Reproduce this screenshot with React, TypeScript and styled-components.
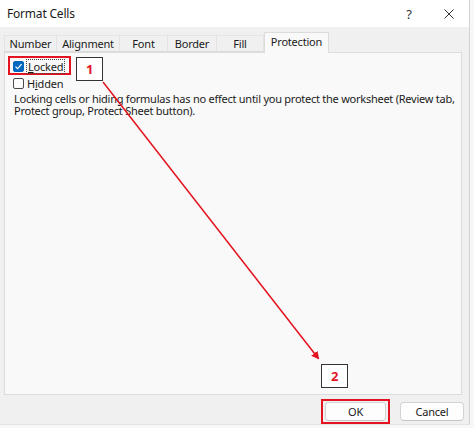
import styled, { createGlobalStyle } from "styled-components";

const GlobalStyle = createGlobalStyle`
  html, body {
    margin: 0;
    padding: 0;
    background: #f7f7f7;
  }
  body {
    font-family: "Noto Sans", "Open Sans", sans-serif;
    color: #1b1b1b;
    letter-spacing: -0.2px;
  }
`;

const Window = styled.div`
  position: relative;
  width: 470px;
  height: 425px;
  background: #f0f0f0;
  border-right: 1px solid #d4d4d4;
  border-bottom: 1px solid #e4e4e4;
  box-sizing: border-box;
  overflow: hidden;
`;

const TitleBar = styled.div`
  height: 27px;
  background: #ffffff;
  display: flex;
  align-items: center;
  padding-left: 7px;
`;

const Title = styled.div`
  font-size: 12px;
  flex: 1;
`;

const TitleButton = styled.div`
  width: 40px;
  height: 27px;
  display: flex;
  align-items: center;
  justify-content: center;
  font-size: 13px;
  color: #333;
`;

const Body = styled.div`
  padding: 5px 7px 0 4px;
`;

const TabRow = styled.div`
  display: flex;
  align-items: flex-end;
  height: 20px;
  position: relative;
  z-index: 1;
`;

const Tab = styled.div<{ $active?: boolean; $first?: boolean; $w: number }>`
  width: ${(p) => p.$w}px;
  box-sizing: border-box;
  height: ${(p) => (p.$active ? "21px" : "17px")};
  margin-bottom: ${(p) => (p.$active ? "-1px" : "0")};
  display: flex;
  align-items: center;
  justify-content: center;
  font-size: 11px;
  padding-bottom: ${(p) => (p.$active ? "3px" : "0")};
  background: ${(p) => (p.$active ? "#f9f9f9" : "#f0f0f0")};
  border: 1px solid ${(p) => (p.$active ? "#dcdcdc" : "#e3e3e3")};
  border-bottom: ${(p) => (p.$active ? "none" : "1px solid #dcdcdc")};
  border-left: ${(p) => (p.$first || p.$active ? undefined : "none")};
  color: #1b1b1b;
`;

const Panel = styled.div`
  height: 343px;
  box-sizing: border-box;
  background: #f9f9f9;
  border: 1px solid #dcdcdc;
  padding: 3px 4px 0 3px;
  position: relative;
`;

const Mark = styled.div`
  display: flex;
  width: fit-content;
  border: 2px solid #e3141f;
  padding: 1px 5px 0 3px;
`;

const CheckRow = styled.div`
  display: flex;
  align-items: center;
  gap: 3px;
  font-size: 11px;
  height: 14px;
`;

const Plain = styled.div`
  padding: 1px 0 0 5px;
`;

const Box = styled.span<{ $checked?: boolean }>`
  width: 11px;
  height: 11px;
  box-sizing: border-box;
  border-radius: 2px;
  border: 1px solid ${(p) => (p.$checked ? "#0067c0" : "#4a4a4a")};
  background: ${(p) => (p.$checked ? "#0067c0" : "#fdfdfd")};
  display: flex;
  align-items: center;
  justify-content: center;
`;

const Focus = styled.span`
  outline: 1px dotted #444;
  outline-offset: 0;
  padding: 0 1px;
  line-height: 13px;
`;

const Key = styled.span`
  text-decoration: underline;
  text-underline-offset: 1px;
`;

const Note = styled.p`
  margin: 3px 0 0 6px;
  font-size: 11px;
  line-height: 12px;
  white-space: nowrap;
  letter-spacing: -0.25px;
`;

const Callout = styled.div<{ $x: number; $y: number }>`
  position: absolute;
  left: ${(p) => p.$x}px;
  top: ${(p) => p.$y}px;
  width: 27px;
  height: 24px;
  box-sizing: border-box;
  border: 1px solid #333;
  background: #ffffff;
  color: #e3141f;
  font-weight: 700;
  font-size: 13px;
  display: flex;
  align-items: center;
  justify-content: center;
  z-index: 3;
`;

const Footer = styled.div`
  display: flex;
  justify-content: flex-end;
  align-items: center;
  gap: 10px;
  padding-top: 4px;
  margin-right: -2px;
`;

const ButtonMark = styled.div`
  border: 2px solid #e3141f;
  padding: 1px 2px;
  display: flex;
`;

const Button = styled.div<{ $w: number }>`
  width: ${(p) => p.$w}px;
  height: 19px;
  box-sizing: border-box;
  border: 1px solid #d3d3d3;
  border-bottom-color: #c4c4c4;
  border-radius: 4px;
  background: #fdfdfd;
  font-size: 11px;
  display: flex;
  align-items: center;
  justify-content: center;
`;

const Arrow = styled.svg`
  position: absolute;
  left: 0;
  top: 0;
  pointer-events: none;
  z-index: 2;
`;

const tabs = [
  { label: "Number", w: 53 },
  { label: "Alignment", w: 63 },
  { label: "Font", w: 48 },
  { label: "Border", w: 49 },
  { label: "Fill", w: 47 },
  { label: "Protection", w: 65, active: true },
];

function Check() {
  return (
    <svg width="9" height="9" viewBox="0 0 9 9">
      <path d="M1.5 4.6 L3.6 6.6 L7.6 2.2" stroke="#fff" strokeWidth="1.2" fill="none" />
    </svg>
  );
}

export default function App() {
  return (
    <>
      <GlobalStyle />
      <Window>
        <TitleBar>
          <Title>Format Cells</Title>
          <TitleButton>?</TitleButton>
          <TitleButton>
            <svg width="10" height="10" viewBox="0 0 10 10">
              <path d="M0.5 0.5 L9.5 9.5 M9.5 0.5 L0.5 9.5" stroke="#333" strokeWidth="1" />
            </svg>
          </TitleButton>
        </TitleBar>
        <Body>
          <TabRow>
            {tabs.map((t, i) => (
              <Tab key={t.label} $w={t.w} $active={t.active} $first={i === 0}>
                {t.label}
              </Tab>
            ))}
          </TabRow>
          <Panel>
            <Mark>
              <CheckRow>
                <Box $checked>
                  <Check />
                </Box>
                <Focus>
                  <Key>L</Key>ocked
                </Focus>
              </CheckRow>
            </Mark>
            <Plain>
              <CheckRow>
                <Box />
                <span>
                  H<Key>i</Key>dden
                </span>
              </CheckRow>
            </Plain>
            <Note>
              Locking cells or hiding formulas has no effect until you protect the worksheet (Review tab,
              <br />
              Protect group, Protect Sheet button).
            </Note>
          </Panel>
          <Footer>
            <ButtonMark>
              <Button $w={61}>OK</Button>
            </ButtonMark>
            <Button $w={64}>Cancel</Button>
          </Footer>
        </Body>
        <Callout $x={76} $y={57}>1</Callout>
        <Callout $x={321} $y={364}>2</Callout>
        <Arrow width="470" height="425">
          <defs>
            <marker id="head" markerWidth="8" markerHeight="8" refX="6" refY="4" orient="auto" markerUnits="userSpaceOnUse">
              <path d="M0 0 L8 4 L0 8 Z" fill="#e3141f" />
            </marker>
          </defs>
          <line x1="103" y1="82" x2="318" y2="358" stroke="#e3141f" strokeWidth="1.5" markerEnd="url(#head)" />
        </Arrow>
      </Window>
    </>
  );
}
